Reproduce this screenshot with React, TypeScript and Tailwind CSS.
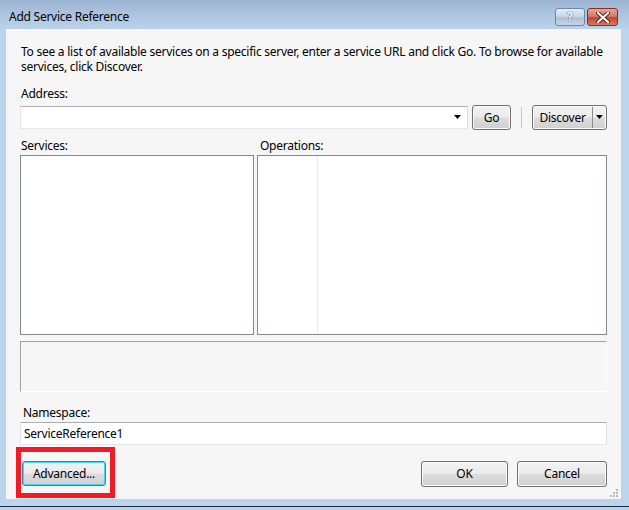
import React from "react";

const font = { fontFamily: '"Noto Sans", "Open Sans", "DejaVu Sans", sans-serif' };

const btnCls =
  "flex items-center justify-center rounded-[3px] border border-[#707070] text-[12px] text-black bg-[linear-gradient(to_bottom,#f2f2f2_0%,#ebebeb_48%,#dddddd_52%,#cfcfcf_100%)] shadow-[inset_0_0_0_1px_#fbfbfb]";

function WinButton({ label, className }: { label: string; className: string }) {
  return <div className={btnCls + " " + className}>{label}</div>;
}

function Grip() {
  const dots = [
    [6, 0],
    [6, 3],
    [3, 3],
    [6, 6],
    [3, 6],
    [0, 6],
  ];
  return (
    <svg width="8" height="8" className="absolute right-[3px] bottom-[2px]">
      {dots.map(([x, y], i) => (
        <rect key={i} x={x} y={y} width="2" height="2" fill="#b6bcc6" />
      ))}
    </svg>
  );
}

export default function App() {
  return (
    <div className="w-[629px] h-[510px] relative overflow-hidden bg-[#bcd4ee] tracking-[-0.25px]" style={font}>
      {/* title bar */}
      <div className="h-[29px] flex items-start justify-between pl-[9px] pr-[11px] bg-[linear-gradient(to_bottom,#9cb4d1_0%,#aec5e0_50%,#bad1ec_100%)]">
        <span className="mt-[9px] text-[12px] leading-[16px] text-black">Add Service Reference</span>
        <div className="flex gap-[2px] mt-[8px]">
          <div className="w-[30px] h-[18px] rounded-[3px] border border-[#6d88a9] bg-[linear-gradient(to_bottom,#e3ecf6_0%,#c9d7e8_45%,#aebfd6_55%,#c6d6ea_100%)] flex items-center justify-center text-[12px] font-bold text-white [text-shadow:0_0_1px_#2e4a6e,0_0_1px_#2e4a6e]">
            ?
          </div>
          <div className="w-[31px] h-[18px] rounded-[3px] border border-[#8a2f26] bg-[linear-gradient(to_bottom,#e8a493_0%,#d47d69_45%,#c2462f_55%,#d77a5d_100%)] flex items-center justify-center">
            <svg width="14" height="11" viewBox="0 0 14 11">
              <path d="M2 1 L12 10 M12 1 L2 10" stroke="#5a1a12" strokeWidth="4" strokeLinecap="round" />
              <path d="M2 1 L12 10 M12 1 L2 10" stroke="#ffffff" strokeWidth="2.2" strokeLinecap="round" />
            </svg>
          </div>
        </div>
      </div>

      {/* client area */}
      <div className="ml-[6px] mr-[8px] h-[470px] bg-[#f6f6f6] relative px-[14px] text-[12px] text-black">
        <p className="pt-[15px] pl-[1px] leading-[15px]">
          To see a list of available services on a specific server, enter a service URL and click Go. To browse for available services, click Discover.
        </p>

        <div className="mt-[12px] pl-[1px] leading-[15px]">Address:</div>
        <div className="mt-[4px] flex items-center h-[25px]">
          <div className="w-[449px] h-[23px] bg-white border border-[#abadb3] border-b-[#e3e9ef] border-l-[#e2e3ea] border-r-[#dbdfe6] flex items-center justify-end pr-[5px]">
            <svg width="8" height="5" viewBox="0 0 8 5">
              <path d="M0 0 H7 L3.5 4 Z" fill="#000" />
            </svg>
          </div>
          <WinButton label="Go" className="ml-[4px] w-[39px] h-[25px]" />
          <div className="ml-[10px] w-px h-[21px] bg-[#c8c8c8]" />
          <div className={btnCls + " ml-[10px] w-[75px] h-[25px] !justify-start"}>
            <span className="w-[60px] text-center">Discover</span>
            <div className="w-px h-[21px] bg-[#8c8c8c]" />
            <svg width="13" height="5" viewBox="0 0 13 5">
              <path d="M3 0 H10 L6.5 4 Z" fill="#000" />
            </svg>
          </div>
        </div>

        <div className="mt-[8px] flex leading-[15px]">
          <span className="w-[237px] pl-[1px]">Services:</span>
          <span className="pl-[3px]">Operations:</span>
        </div>
        <div className="mt-[2px] flex gap-[3px] h-[180px]">
          <div className="w-[234px] bg-white border border-[#828790]" />
          <div className="flex-1 bg-white border border-[#828790] flex">
            <div className="w-[60px] border-r border-[#e3eefa]" />
          </div>
        </div>

        <div className="mt-[6px] h-[51px] border border-t-[#a0a0a0] border-l-[#a0a0a0] border-r-white border-b-white" />

        <div className="mt-[13px] pl-[3px] leading-[15px]">Namespace:</div>
        <div className="mt-[2px] h-[23px] bg-white border border-[#abadb3] border-b-[#e3e9ef] border-l-[#e2e3ea] border-r-[#dbdfe6] flex items-center pl-[3px]">
          ServiceReference1
        </div>

        <div className="mt-[2px] flex items-start justify-between">
          <div className="-ml-[4px] w-[99px] h-[51px] border-[5px] border-[#ee1c25] pl-[1px] pt-[9px]">
            <div className="w-[84px] h-[25px] rounded-[3px] border border-[#3c7fb1] shadow-[inset_0_0_0_1px_#48d6f8] bg-[linear-gradient(to_bottom,#f2f2f2_0%,#ebebeb_48%,#dddddd_52%,#cfcfcf_100%)] flex items-center justify-center">
              Advanced...
            </div>
          </div>
          <div className="flex gap-[9px] mt-[14px]">
            <WinButton label="OK" className="w-[87px] h-[26px]" />
            <WinButton label="Cancel" className="w-[90px] h-[26px]" />
          </div>
        </div>
        <Grip />
      </div>

      {/* bottom frame */}
      <div className="h-[7px]" />
      <div className="h-[1px] bg-[#1d2b3a]" />
    </div>
  );
}
